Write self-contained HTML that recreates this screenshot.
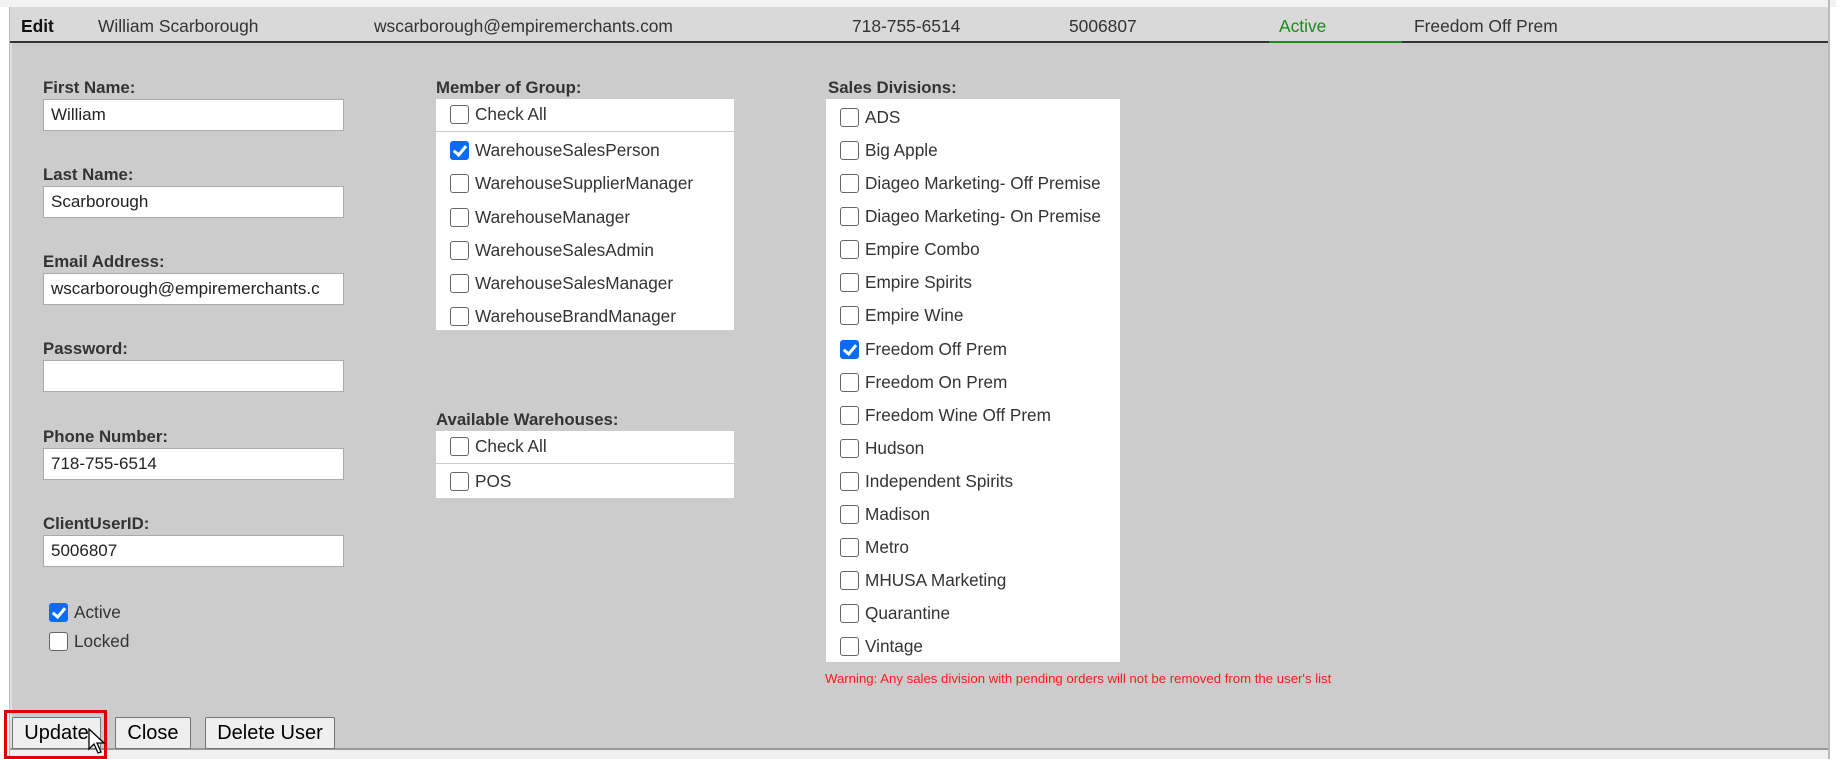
<!DOCTYPE html>
<html><head><meta charset="utf-8"><style>
*{box-sizing:border-box;margin:0;padding:0}
body{width:1836px;height:759px;background:#fff;position:relative;overflow:hidden;font-family:"Liberation Sans",sans-serif;color:#333;}
.a{position:absolute;white-space:nowrap}
.hd{font-size:17.4px;line-height:20px;top:16px;color:#333}
.lbl{font-weight:bold;font-size:16.8px;line-height:20px;color:#333}
.inp{position:absolute;left:43px;width:301px;height:32px;background:#fff;border:1px solid #aaa;font-size:17px;line-height:30px;padding-left:7px;color:#222;overflow:hidden}
.box{position:absolute;background:#fff}
.row{position:absolute;height:19px;font-size:17.2px;line-height:19px;color:#333;white-space:nowrap;display:flex;align-items:center}
.cb{display:inline-block;width:19px;height:19px;border:1.5px solid #666;border-radius:3px;background:#fff;margin-right:6px;position:relative;flex:none}
.cb.on{background:#0a6cf5;border-color:#0a6cf5}
.cb.on:after{content:"";position:absolute;left:5px;top:1px;width:5px;height:10px;border:solid #fff;border-width:0 3px 3px 0;transform:rotate(40deg)}
.btn{position:absolute;top:717px;height:32px;background:#efefef;border:1px solid #767676;border-radius:2px;font-size:20px;line-height:30px;text-align:center;color:#000;font-family:"Liberation Sans",sans-serif}
</style></head><body>
<div class="a" style="left:0;top:0;width:1836px;height:7px;background:#f2f2f2"></div>
<div class="a" style="left:9px;top:7px;width:1px;height:752px;background:#bbb"></div>
<div class="a" style="left:1828px;top:0;width:2px;height:759px;background:#bbb"></div>
<div class="a" style="left:10px;top:7px;width:1818px;height:35px;background:#d9d9d9"></div>
<div class="a" style="left:10px;top:41px;width:1818px;height:2px;background:#333"></div>
<div class="a" style="left:12px;top:43px;width:1816px;height:706px;background:#cccccc"></div>
<div class="a" style="left:10px;top:43px;width:2px;height:706px;background:#e0e0e0"></div>
<div class="a" style="left:10px;top:748px;width:1818px;height:2px;background:#999"></div>
<div class="a" style="left:10px;top:750px;width:1818px;height:9px;background:#f0f0f0"></div>

<div class="a hd" style="left:21px;font-weight:bold;color:#111">Edit</div>
<div class="a hd" style="left:98px">William Scarborough</div>
<div class="a hd" style="left:374px">wscarborough@empiremerchants.com</div>
<div class="a hd" style="left:852px">718-755-6514</div>
<div class="a hd" style="left:1069px">5006807</div>
<div class="a hd" style="left:1279px;color:#1a8a1a">Active</div>
<div class="a" style="left:1269px;top:41px;width:133px;height:2px;background:#1a8a1a"></div>
<div class="a hd" style="left:1414px">Freedom Off Prem</div>

<div class="a lbl" style="left:43px;top:78px">First Name:</div>
<div class="inp" style="top:99px">William</div>
<div class="a lbl" style="left:43px;top:165px">Last Name:</div>
<div class="inp" style="top:186px">Scarborough</div>
<div class="a lbl" style="left:43px;top:252px">Email Address:</div>
<div class="inp" style="top:273px">wscarborough@empiremerchants.c</div>
<div class="a lbl" style="left:43px;top:339px">Password:</div>
<div class="inp" style="top:360px"></div>
<div class="a lbl" style="left:43px;top:427px">Phone Number:</div>
<div class="inp" style="top:448px">718-755-6514</div>
<div class="a lbl" style="left:43px;top:514px">ClientUserID:</div>
<div class="inp" style="top:535px">5006807</div>
<div class="row" style="left:49px;top:603px"><span class="cb on"></span>Active</div>
<div class="row" style="left:49px;top:632px"><span class="cb"></span>Locked</div>

<div class="a lbl" style="left:436px;top:78px">Member of Group:</div>
<div class="box" style="left:436px;top:99px;width:298px;height:231px"></div>
<div class="a" style="left:436px;top:131px;width:298px;height:1px;background:#ccc"></div>
<div class="row" style="left:450px;top:105px"><span class="cb"></span>Check All</div>
<div class="row" style="left:450px;top:141px"><span class="cb on"></span>WarehouseSalesPerson</div>
<div class="row" style="left:450px;top:174px"><span class="cb"></span>WarehouseSupplierManager</div>
<div class="row" style="left:450px;top:208px"><span class="cb"></span>WarehouseManager</div>
<div class="row" style="left:450px;top:241px"><span class="cb"></span>WarehouseSalesAdmin</div>
<div class="row" style="left:450px;top:274px"><span class="cb"></span>WarehouseSalesManager</div>
<div class="row" style="left:450px;top:307px"><span class="cb"></span>WarehouseBrandManager</div>

<div class="a lbl" style="left:436px;top:410px">Available Warehouses:</div>
<div class="box" style="left:436px;top:431px;width:298px;height:67px"></div>
<div class="a" style="left:436px;top:463px;width:298px;height:1px;background:#ccc"></div>
<div class="row" style="left:450px;top:437px"><span class="cb"></span>Check All</div>
<div class="row" style="left:450px;top:472px"><span class="cb"></span>POS</div>

<div class="a lbl" style="left:828px;top:78px">Sales Divisions:</div>
<div class="box" style="left:826px;top:99px;width:294px;height:563px"></div>
<div class="row" style="left:840px;top:108px"><span class="cb"></span>ADS</div>
<div class="row" style="left:840px;top:141px"><span class="cb"></span>Big Apple</div>
<div class="row" style="left:840px;top:174px"><span class="cb"></span>Diageo Marketing- Off Premise</div>
<div class="row" style="left:840px;top:207px"><span class="cb"></span>Diageo Marketing- On Premise</div>
<div class="row" style="left:840px;top:240px"><span class="cb"></span>Empire Combo</div>
<div class="row" style="left:840px;top:273px"><span class="cb"></span>Empire Spirits</div>
<div class="row" style="left:840px;top:306px"><span class="cb"></span>Empire Wine</div>
<div class="row" style="left:840px;top:340px"><span class="cb on"></span>Freedom Off Prem</div>
<div class="row" style="left:840px;top:373px"><span class="cb"></span>Freedom On Prem</div>
<div class="row" style="left:840px;top:406px"><span class="cb"></span>Freedom Wine Off Prem</div>
<div class="row" style="left:840px;top:439px"><span class="cb"></span>Hudson</div>
<div class="row" style="left:840px;top:472px"><span class="cb"></span>Independent Spirits</div>
<div class="row" style="left:840px;top:505px"><span class="cb"></span>Madison</div>
<div class="row" style="left:840px;top:538px"><span class="cb"></span>Metro</div>
<div class="row" style="left:840px;top:571px"><span class="cb"></span>MHUSA Marketing</div>
<div class="row" style="left:840px;top:604px"><span class="cb"></span>Quarantine</div>
<div class="row" style="left:840px;top:637px"><span class="cb"></span>Vintage</div>
<div class="a" style="left:825px;top:671px;font-size:13.2px;line-height:16px;color:#ff1a1a">Warning: Any sales division with pending orders will not be removed from the user's list</div>

<div class="a" style="left:4px;top:710px;width:103px;height:49px;border:3px solid #e00000"></div>
<div class="btn" style="left:12px;width:89px">Update</div>
<div class="btn" style="left:115px;width:76px">Close</div>
<div class="btn" style="left:205px;width:130px">Delete User</div>
<svg class="a" style="left:88px;top:728px" width="20" height="28" viewBox="0 0 20 28"><path d="M1 1 L1 21 L6 16 L10 25 L13 24 L9 15 L16 15 Z" fill="#fff" stroke="#000" stroke-width="1.3"/></svg>
</body></html>
